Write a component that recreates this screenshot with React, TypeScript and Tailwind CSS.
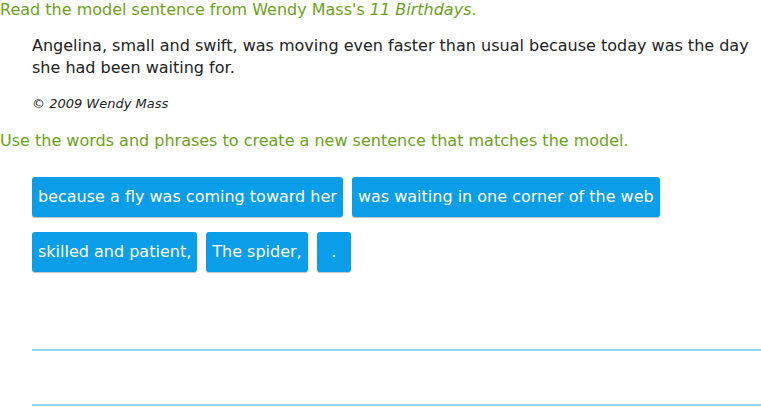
const tilesRow1 = ["because a fly was coming toward her", "was waiting in one corner of the web"];
const tilesRow2 = ["skilled and patient,", "The spider,", "."];

function Tile({ label }: { label: string }) {
  return (
    <div
      className={`flex h-10 items-center rounded-[3px] bg-[#0a9de8] text-[16px] text-white shadow-[0_1px_1px_rgba(0,0,0,0.25)] ${
        label === "." ? "w-[34px] justify-center" : "px-[6px]"
      }`}
    >
      {label}
    </div>
  );
}

export default function App() {
  return (
    <div className="min-h-[407px] w-[761px] overflow-hidden bg-white font-['DejaVu_Sans',Verdana,sans-serif]">
      <p className="text-[16px] leading-5 text-[#6d9f1e]">
        Read the model sentence from Wendy Mass's <i>11 Birthdays</i>.
      </p>

      <div className="pl-8 pt-[15px]">
        <p className="text-[16px] leading-[22px] text-[#222]">
          Angelina, small and swift, was moving even faster than usual because today was the day she had been
          waiting for.
        </p>
        <p className="mt-[17px] text-[13px] italic leading-4 text-[#222]">© 2009 Wendy Mass</p>
      </div>

      <p className="mt-[19px] text-[16px] leading-5 text-[#6d9f1e]">
        Use the words and phrases to create a new sentence that matches the model.
      </p>

      <div className="flex flex-col gap-[15px] pl-8 pt-[26px]">
        <div className="flex gap-[9px]">
          {tilesRow1.map((t) => (
            <Tile key={t} label={t} />
          ))}
        </div>
        <div className="flex gap-[9px]">
          {tilesRow2.map((t) => (
            <Tile key={t} label={t} />
          ))}
        </div>
      </div>

      <div className="pl-8">
        <div className="mt-[77px] h-[2px] bg-[#8cd7f7]" />
        <div className="mt-[53px] h-[2px] bg-[#8cd7f7]" />
      </div>
    </div>
  );
}
